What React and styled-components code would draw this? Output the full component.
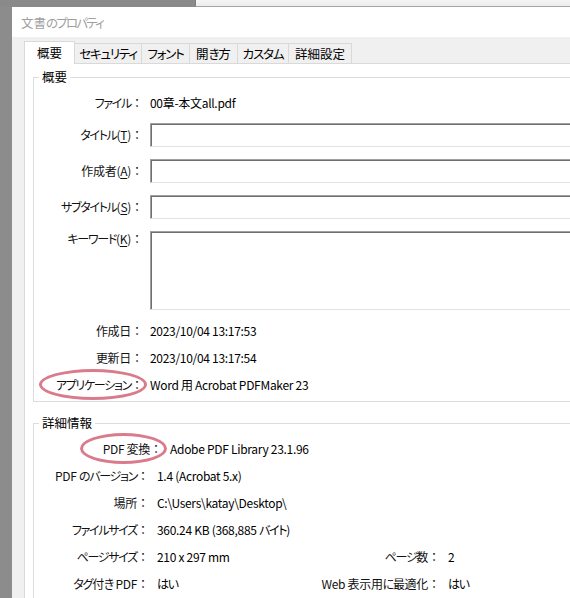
import React from "react";
import styled, { createGlobalStyle } from "styled-components";

const GlobalStyle = createGlobalStyle`
  html, body { margin: 0; padding: 0; }
  body {
    width: 570px;
    height: 598px;
    overflow: hidden;
    background: #8c8c8c;
    font-family: "Noto Sans CJK JP", "Noto Sans", sans-serif;
    font-feature-settings: "palt";
    color: #000;
    -webkit-font-smoothing: antialiased;
  }
`;

const Root = styled.div`
  position: relative;
  width: 570px;
  height: 598px;
  overflow: hidden;
  display: grid;
  grid-template-rows: 7px 1fr;
`;

const TopStrip = styled.div`
  display: flex;
`;

const BackGap = styled.div`
  flex: 0 0 195px;
  background: #8a8a8a;
`;

const BehindWindow = styled.div`
  flex: 1;
  background: linear-gradient(#f5f5f5, #ebebeb);
  border-left: 1px solid #7e7e7e;
  border-bottom: 1px solid #a4a4a4;
`;

const MainRow = styled.div`
  display: flex;
  padding-left: 12px;
  min-height: 0;
`;

const Window = styled.div`
  flex: 1;
  min-width: 0;
  display: flex;
  flex-direction: column;
  background: #f0f0f0;
`;

const TitleBar = styled.div`
  flex: 0 0 30px;
  display: flex;
  align-items: center;
  padding-left: 9px;
  background: #fff;
  color: #9f9f9f;
  font-size: 12.5px;
`;

const Body = styled.div`
  flex: 1;
  display: flex;
  flex-direction: column;
  padding: 4px 0 0 12px;
  min-height: 0;
`;

const TabList = styled.div`
  display: flex;
  align-items: flex-end;
  height: 22px;
  position: relative;
  z-index: 1;
`;

const Tab = styled.div`
  box-sizing: border-box;
  flex: 0 0 ${(p) => p.$w}px;
  height: ${(p) => (p.$active ? 23 : 20)}px;
  margin-bottom: ${(p) => (p.$active ? -1 : 0)}px;
  display: flex;
  align-items: center;
  justify-content: center;
  padding-top: ${(p) => (p.$active ? 0 : 1)}px;
  background: ${(p) => (p.$active ? "#fff" : "#f0f0f0")};
  border-top: 1px solid #d9d9d9;
  border-right: 1px solid #d9d9d9;
  border-left: ${(p) => (p.$first ? "1px solid #d9d9d9" : "none")};
  font-size: 12.5px;
  line-height: 16px;
  white-space: nowrap;
`;

const Panel = styled.div`
  flex: 1;
  background: #fff;
  border-top: 1px solid #d9d9d9;
  border-left: 1px solid #d9d9d9;
  padding: 5px 0 0 8px;
  display: flex;
  flex-direction: column;
`;

const Group = styled.fieldset`
  margin: ${(p) => p.$mt || 0}px 0 0 0;
  padding: 0 0 ${(p) => p.$pb || 0}px 0;
  border: 1px solid #dcdcdc;
  border-right: none;
  min-width: 0;
  display: flex;
  flex-direction: column;
`;

const Legend = styled.legend`
  margin-left: 5px;
  padding: 0 3px;
  font-size: 12.5px;
  line-height: 16px;
`;

const Row = styled.div`
  display: flex;
  align-items: ${(p) => (p.$top ? "flex-start" : "center")};
  height: ${(p) => p.$h || 22}px;
  margin-top: ${(p) => p.$mt || 0}px;
  font-size: 12px;
  line-height: 16px;
`;

const Label = styled.div`
  flex: 0 0 ${(p) => p.$w}px;
  display: flex;
  justify-content: flex-end;
  white-space: nowrap;
  color: #111;
  letter-spacing: -0.3px;
`;

const Colon = styled.span`
  display: inline-block;
  width: 12px;
  text-align: center;
  letter-spacing: 0;
  font-feature-settings: normal;
`;

const Key = styled.span`
  text-decoration: underline;
  text-underline-offset: 2px;
`;

const Kana = styled.span`
  letter-spacing: ${(p) => p.$ls ?? -1.3}px;
`;

const Value = styled.div`
  margin-left: ${(p) => p.$gap ?? 7}px;
  flex: ${(p) => (p.$w ? `0 0 ${p.$w}px` : "1 1 auto")};
  white-space: nowrap;
  letter-spacing: -0.3px;
`;

const Field = styled.div`
  box-sizing: border-box;
  margin-left: 7px;
  flex: 1;
  align-self: stretch;
  background: #fff;
  border-top: 1px solid #a0a0a0;
  border-left: 1px solid #a0a0a0;
  border-bottom: 1px solid #e3e3e3;
  box-shadow: inset 1px 1px 0 #6f6f6f;
`;

const Mark = styled.div`
  position: absolute;
  left: ${(p) => p.$x}px;
  top: ${(p) => p.$y}px;
  width: ${(p) => p.$w}px;
  height: ${(p) => p.$h}px;
  box-sizing: border-box;
  border: 3px solid #da7b8b;
  border-radius: 50%;
  pointer-events: none;
`;

const tabs = [
  { t: "概要", w: 51 },
  { t: "セキュリティ", w: 67 },
  { t: "フォント", w: 48 },
  { t: "開き方", w: 48 },
  { t: "カスタム", w: 51 },
  { t: "詳細設定", w: 63 },
];

const sq = (str, ls) =>
  str.split(/([\u3040-\u30FF]+)/).map((part, i) =>
    i % 2 === 1 ? (
      <Kana key={i} $ls={ls}>
        {part}
      </Kana>
    ) : (
      part
    )
  );

const L = ({ w, t, k }) => (
  <Label $w={w}>
    <span>
      {sq(t)}
      {k && (
        <>
          (<Key>{k}</Key>)
        </>
      )}
    </span>
    <Colon>：</Colon>
  </Label>
);

const V = ({ gap, w, children }) => (
  <Value $gap={gap} $w={w}>
    {sq(children)}
  </Value>
);

export default function App() {
  return (
    <>
      <GlobalStyle />
      <Root>
        <TopStrip>
          <BackGap />
          <BehindWindow />
        </TopStrip>
        <MainRow>
          <Window>
            <TitleBar>{sq("文書のプロパティ", -1.8)}</TitleBar>
            <Body>
              <TabList>
                {tabs.map((tab, i) => (
                  <Tab key={tab.t} $w={tab.w} $active={i === 0} $first={i === 0}>
                    {sq(tab.t, -1.2)}
                  </Tab>
                ))}
              </TabList>
              <Panel>
                <Group $pb={5}>
                  <Legend>概要</Legend>
                  <Row $mt={7}>
                    <L w={109} t="ファイル" />
                    <V>00章-本文all.pdf</V>
                  </Row>
                  <Row $mt={9} $h={24}>
                    <L w={109} t="タイトル" k="T" />
                    <Field />
                  </Row>
                  <Row $mt={12} $h={24}>
                    <L w={109} t="作成者" k="A" />
                    <Field />
                  </Row>
                  <Row $mt={12} $h={24}>
                    <L w={109} t="サブタイトル" k="S" />
                    <Field />
                  </Row>
                  <Row $mt={12} $h={79} $top>
                    <L w={109} t="キーワード" k="K" />
                    <Field />
                  </Row>
                  <Row $mt={10}>
                    <L w={109} t="作成日" />
                    <V>2023/10/04 13:17:53</V>
                  </Row>
                  <Row $mt={5}>
                    <L w={109} t="更新日" />
                    <V>2023/10/04 13:17:54</V>
                  </Row>
                  <Row $mt={5}>
                    <L w={109} t="アプリケーション" />
                    <V>Word 用 Acrobat PDFMaker 23</V>
                  </Row>
                </Group>
                <Group $mt={13} $pb={20}>
                  <Legend>詳細情報</Legend>
                  <Row $mt={7}>
                    <L w={128} t="PDF 変換" />
                    <V gap={8}>Adobe PDF Library 23.1.96</V>
                  </Row>
                  <Row $mt={5}>
                    <L w={115} t="PDF のバージョン" />
                    <V gap={8}>1.4 (Acrobat 5.x)</V>
                  </Row>
                  <Row $mt={5}>
                    <L w={115} t="場所" />
                    <V gap={8}>C:\Users\katay\Desktop\</V>
                  </Row>
                  <Row $mt={5}>
                    <L w={115} t="ファイルサイズ" />
                    <V gap={8}>360.24 KB (368,885 バイト)</V>
                  </Row>
                  <Row $mt={5}>
                    <L w={115} t="ページサイズ" />
                    <V gap={8} w={143}>210 x 297 mm</V>
                    <L w={140} t="ページ数" />
                    <V gap={8}>2</V>
                  </Row>
                  <Row $mt={5}>
                    <L w={115} t="タグ付き PDF" />
                    <V gap={8} w={143}>はい</V>
                    <L w={140} t="Web 表示用に最適化" />
                    <V gap={8}>はい</V>
                  </Row>
                </Group>
              </Panel>
            </Body>
          </Window>
        </MainRow>
        <Mark $x={39} $y={369} $w={108} $h={31} />
        <Mark $x={80} $y={433} $w={87} $h={31} />
      </Root>
    </>
  );
}
